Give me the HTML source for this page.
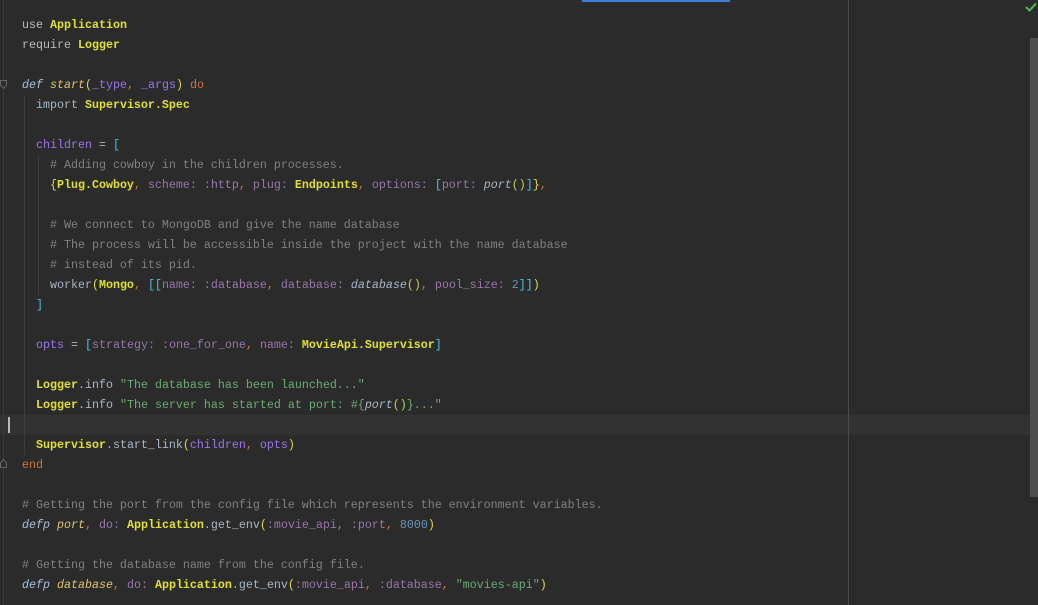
<!DOCTYPE html>
<html><head><meta charset="utf-8"><style>
html,body{margin:0;padding:0;width:1038px;height:605px;overflow:hidden;background:#2b2b2b;}
#ed{position:relative;width:1038px;height:605px;font-family:"Liberation Mono","DejaVu Sans Mono",monospace;font-size:11.67px;color:#a9b7c6;}
.l{position:absolute;left:22px;height:20px;line-height:20px;white-space:pre;margin-top:1px}
.y{color:#e0e030;font-weight:bold}
.k{color:#cc7832}
.c{color:#808080}
.v{color:#9b75e8}
.a{color:#9876aa}
.s{color:#6aab73}
.n{color:#6897bb}
.d{font-style:italic;color:#a9c1dd}
.f{font-style:italic;color:#e0c46c}
.i{font-style:italic}
.b1{color:#e6d84a}.b2{color:#49c2e0}.b3{color:#c6d050}
.g{color:#bbbbbb}
</style></head><body><div id="ed">
<div style="position:absolute;left:582px;top:0;width:148px;height:2px;background:#3d7dd8"></div>
<div style="position:absolute;left:0;top:415px;width:1030px;height:20px;background:#323232"></div>
<div style="position:absolute;left:8px;top:417px;width:2px;height:16px;background:#bbbbbb"></div>
<div style="position:absolute;left:3px;top:0;width:1px;height:605px;background:#3a3a3a"></div>
<div style="position:absolute;left:24px;top:95px;width:1px;height:360px;background:#3d3d3d"></div>
<div style="position:absolute;left:38px;top:155px;width:1px;height:140px;background:#3d3d3d"></div>
<div style="position:absolute;left:848px;top:0;width:1px;height:605px;background:#4a4a4a"></div>
<div style="position:absolute;left:1030px;top:38px;width:8px;height:459px;background:#4e4e4e"></div>
<svg style="position:absolute;left:1025px;top:2px" width="12" height="10"><path d="M1 5 L4.5 8.5 L11 1.5" stroke="#4caf50" stroke-width="2.2" fill="none"/></svg>
<svg style="position:absolute;left:0;top:80px" width="8" height="10"><path d="M0.5 0.5H6.5V5L3.5 8.5L0.5 5Z" stroke="#666" fill="#2b2b2b"/></svg>
<svg style="position:absolute;left:0;top:458px" width="8" height="10"><path d="M0.5 9.5H6.5V5L3.5 1.5L0.5 5Z" stroke="#666" fill="#2b2b2b"/></svg>

<div class="l" style="top:14px"><span class="g">use</span> <span class="y">Application</span></div>
<div class="l" style="top:34px"><span class="g">require</span> <span class="y">Logger</span></div>
<div class="l" style="top:74px"><span class="d">def</span> <span class="f">start</span><span class="b1">(</span><span class="v">_type</span><span class="k">,</span> <span class="v">_args</span><span class="b1">)</span> <span class="k">do</span></div>
<div class="l" style="top:94px">  import <span class="y">Supervisor.Spec</span></div>
<div class="l" style="top:134px">  <span class="v">children</span> = <span class="b2">[</span></div>
<div class="l" style="top:154px">    <span class="c"># Adding cowboy in the children processes.</span></div>
<div class="l" style="top:174px">    <span class="b1">{</span><span class="y">Plug.Cowboy</span><span class="k">,</span> <span class="a">scheme:</span> <span class="a">:http</span><span class="k">,</span> <span class="a">plug:</span> <span class="y">Endpoints</span><span class="k">,</span> <span class="a">options:</span> <span class="b2">[</span><span class="a">port:</span> <span class="i">port</span><span class="b3">()</span><span class="b2">]</span><span class="b1">}</span><span class="k">,</span></div>
<div class="l" style="top:214px">    <span class="c"># We connect to MongoDB and give the name database</span></div>
<div class="l" style="top:234px">    <span class="c"># The process will be accessible inside the project with the name database</span></div>
<div class="l" style="top:254px">    <span class="c"># instead of its pid.</span></div>
<div class="l" style="top:274px">    worker<span class="b1">(</span><span class="y">Mongo</span><span class="k">,</span> <span class="b2">[[</span><span class="a">name:</span> <span class="a">:database</span><span class="k">,</span> <span class="a">database:</span> <span class="i">database</span><span class="b3">()</span><span class="k">,</span> <span class="a">pool_size:</span> <span class="n">2</span><span class="b2">]]</span><span class="b1">)</span></div>
<div class="l" style="top:294px">  <span class="b2">]</span></div>
<div class="l" style="top:334px">  <span class="v">opts</span> = <span class="b2">[</span><span class="a">strategy:</span> <span class="a">:one_for_one</span><span class="k">,</span> <span class="a">name:</span> <span class="y">MovieApi.Supervisor</span><span class="b2">]</span></div>
<div class="l" style="top:374px">  <span class="y">Logger</span>.info <span class="s">"The database has been launched..."</span></div>
<div class="l" style="top:394px">  <span class="y">Logger</span>.info <span class="s">"The server has started at port: </span><span class="s">#{</span><span class="i">port</span><span class="b3">()</span><span class="s">}..."</span></div>
<div class="l" style="top:434px">  <span class="y">Supervisor</span>.start_link<span class="b1">(</span><span class="v">children</span><span class="k">,</span> <span class="v">opts</span><span class="b1">)</span></div>
<div class="l" style="top:454px"><span class="k">end</span></div>
<div class="l" style="top:494px"><span class="c"># Getting the port from the config file which represents the environment variables.</span></div>
<div class="l" style="top:514px"><span class="d">defp</span> <span class="f">port</span><span class="k">,</span> <span class="a">do:</span> <span class="y">Application</span>.get_env<span class="b1">(</span><span class="a">:movie_api</span><span class="k">,</span> <span class="a">:port</span><span class="k">,</span> <span class="n">8000</span><span class="b1">)</span></div>
<div class="l" style="top:554px"><span class="c"># Getting the database name from the config file.</span></div>
<div class="l" style="top:574px"><span class="d">defp</span> <span class="f">database</span><span class="k">,</span> <span class="a">do:</span> <span class="y">Application</span>.get_env<span class="b1">(</span><span class="a">:movie_api</span><span class="k">,</span> <span class="a">:database</span><span class="k">,</span> <span class="s">"movies-api"</span><span class="b1">)</span></div>
</div></body></html>
